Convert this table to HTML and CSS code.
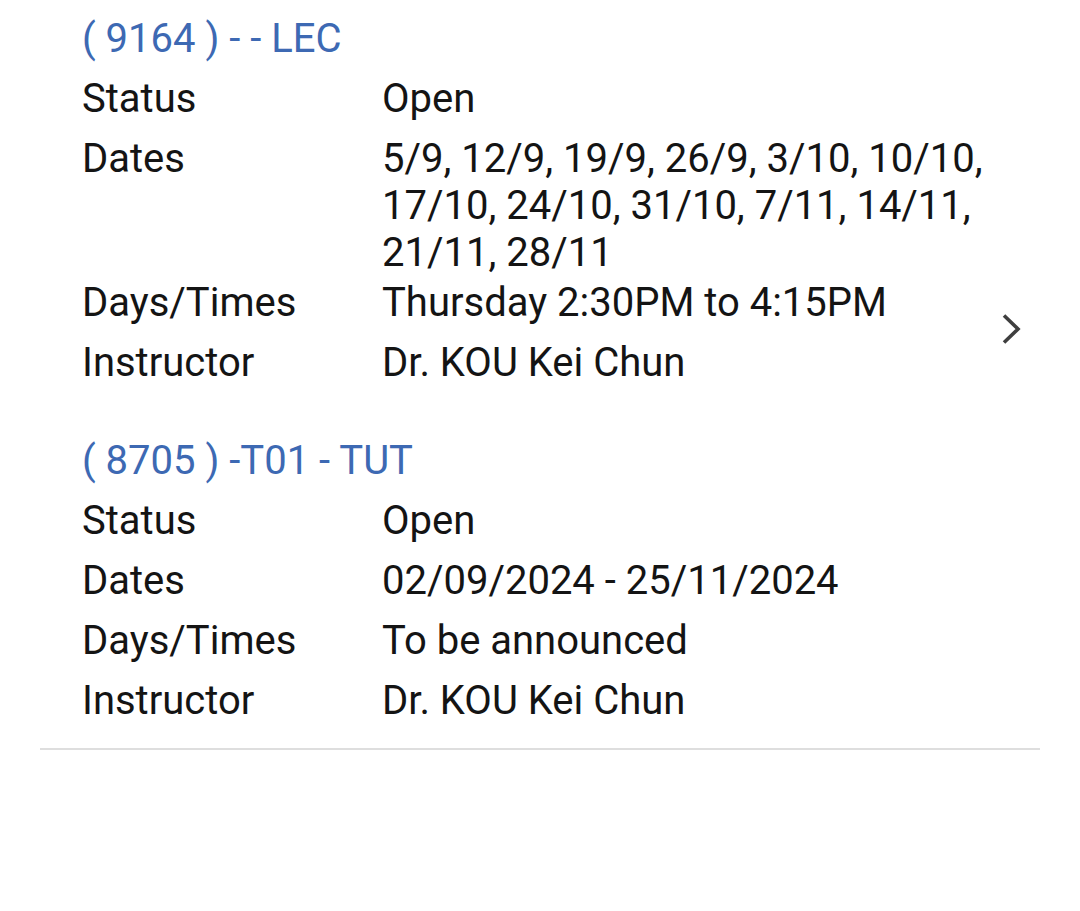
FILE: index.html
```html
<!DOCTYPE html>
<html>
<head>
<meta charset="utf-8">
<link rel="stylesheet" href="styles.css">
</head>
<body>
<div class="list">
  <div class="item">
    <div class="section">
      <div class="row heading">( 9164 ) - - LEC</div>
      <div class="row"><div class="label">Status</div><div class="value">Open</div></div>
      <div class="row"><div class="label">Dates</div><div class="value">5/9, 12/9, 19/9, 26/9, 3/10, 10/10, 17/10, 24/10, 31/10, 7/11, 14/11, 21/11, 28/11</div></div>
      <div class="row"><div class="label">Days/Times</div><div class="value">Thursday 2:30PM to 4:15PM</div></div>
      <div class="row"><div class="label">Instructor</div><div class="value">Dr. KOU Kei Chun</div></div>
    </div>
    <div class="section">
      <div class="row heading">( 8705 ) -T01 - TUT</div>
      <div class="row"><div class="label">Status</div><div class="value">Open</div></div>
      <div class="row"><div class="label">Dates</div><div class="value">02/09/2024 - 25/11/2024</div></div>
      <div class="row"><div class="label">Days/Times</div><div class="value">To be announced</div></div>
      <div class="row"><div class="label">Instructor</div><div class="value">Dr. KOU Kei Chun</div></div>
    </div>
    <svg class="chevron" width="22" height="34" viewBox="0 0 22 34"><polyline points="4,3.5 18,17 4,30.5" fill="none" stroke="#3f3f3f" stroke-width="3.6"/></svg>
  </div>
</div>
</body>
</html>
```
FILE: styles.css
```css
html, body {
  margin: 0;
  padding: 0;
  background: #ffffff;
}
body {
  font-family: Roboto, "Noto Sans", sans-serif;
  font-size: 40px;
  color: #141414;
}
.list {
  padding: 0 40px;
}
.item {
  position: relative;
  border-bottom: 2px solid #dedede;
  padding: 13px 0 13px 42px;
}
.section + .section {
  margin-top: 38px;
}
.row {
  display: flex;
  align-items: flex-start;
  min-height: 60px;
  box-sizing: border-box;
  padding: 1.5px 0;
  line-height: 47px;
}
.heading {
  color: #3d69b3;
}
.label {
  flex: 0 0 300px;
}
.value {
  width: 640px;
}
.chevron {
  position: absolute;
  right: 18px;
  top: 312px;
}
```
